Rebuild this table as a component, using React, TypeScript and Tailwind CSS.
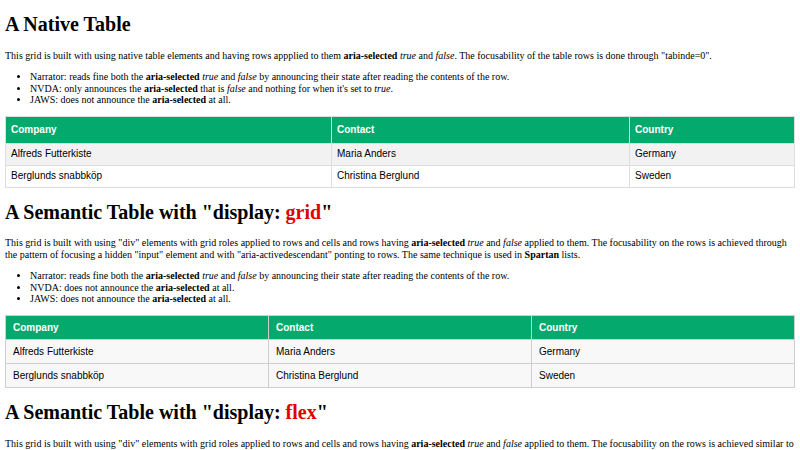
import React from 'react';

const rows = [
  ['Alfreds Futterkiste', 'Maria Anders', 'Germany'],
  ['Berglunds snabbköp', 'Christina Berglund', 'Sweden'],
];

const Narrator = () => (
  <li>
    Narrator: reads fine both the <b>aria-selected</b> <i>true</i> and <i>false</i> by announcing their state after reading the contents of the row.
  </li>
);

const Heading: React.FC<{ children: React.ReactNode }> = ({ children }) => (
  <h1 className="text-[20px] leading-[23px] font-bold my-[13.4px]">{children}</h1>
);

const NativeTable = () => (
  <table className="w-full border-collapse font-['Liberation_Sans',Arial,sans-serif] text-[10px] leading-[11.5px]">
    <colgroup>
      <col className="w-[326px]" />
      <col className="w-[298px]" />
      <col />
    </colgroup>
    <thead>
      <tr>
        {['Company', 'Contact', 'Country'].map((h) => (
          <th key={h} className="bg-[#04aa6d] text-white text-left font-bold border border-[#ddd] px-[5px] pt-[7.25px] pb-[7px]">
            {h}
          </th>
        ))}
      </tr>
    </thead>
    <tbody>
      {rows.map((r, i) => (
        <tr key={i} className={i % 2 === 0 ? 'bg-[#f2f2f2]' : 'bg-white'}>
          {r.map((c) => (
            <td key={c} className="border border-[#ddd] px-[5px] py-[4.75px]">
              {c}
            </td>
          ))}
        </tr>
      ))}
    </tbody>
  </table>
);

const GridTable = () => (
  <div role="grid" className="border-l border-t border-[#cfcfcf] font-['Liberation_Sans',Arial,sans-serif] text-[10px] leading-[11.5px]">
    <div role="row" className="grid grid-cols-3">
      {['Company', 'Contact', 'Country'].map((h) => (
        <div key={h} role="columnheader" className="bg-[#04aa6d] text-white font-bold border-r border-b border-[#cfcfcf] px-[7px] py-[5.75px]">
          {h}
        </div>
      ))}
    </div>
    {rows.map((r, i) => (
      <div key={i} role="row" aria-selected={i === 0} className="grid grid-cols-3 bg-[#f9f8f8]">
        {r.map((c) => (
          <div key={c} role="gridcell" className="border-r border-b border-[#cfcfcf] px-[7px] py-[5.75px]">
            {c}
          </div>
        ))}
      </div>
    ))}
  </div>
);

export default function App() {
  return (
    <div className="px-[5px] bg-white text-black font-['Liberation_Serif','Times_New_Roman',serif] text-[10px] leading-[11.5px]">
      <Heading>A Native Table</Heading>
      <p className="my-[10px]">
        This grid is built with using native table elements and having rows appplied to them <b>aria-selected</b> <i>true</i> and <i>false</i>. The focusability of the table rows is done through "tabinde=0".
      </p>
      <ul className="list-disc pl-[25px] my-[10px]">
        <Narrator />
        <li>
          NVDA: only announces the <b>aria-selected</b> that is <i>false</i> and nothing for when it's set to <i>true</i>.
        </li>
        <li>
          JAWS: does not announce the <b>aria-selected</b> at all.
        </li>
      </ul>
      <NativeTable />

      <Heading>
        A Semantic Table with "display: <span className="text-[#e00000]">grid</span>"
      </Heading>
      <p className="my-[10px]">
        This grid is built with using "div" elements with grid roles applied to rows and cells and rows having <b>aria-selected</b> <i>true</i> and <i>false</i> applied to them. The focusability on the rows is achieved through the pattern of focusing a hidden "input" element and with "aria-activedescendant" ponting to rows. The same technique is used in <b>Spartan</b> lists.
      </p>
      <ul className="list-disc pl-[25px] my-[10px]">
        <Narrator />
        <li>
          NVDA: does not announce the <b>aria-selected</b> at all.
        </li>
        <li>
          JAWS: does not announce the <b>aria-selected</b> at all.
        </li>
      </ul>
      <GridTable />

      <Heading>
        A Semantic Table with "display: <span className="text-[#e00000]">flex</span>"
      </Heading>
      <p className="my-[10px]">
        This grid is built with using "div" elements with grid roles applied to rows and cells and rows having <b>aria-selected</b> <i>true</i> and <i>false</i> applied to them. The focusability on the rows is achieved similar to the grid above, by focusing a hidden "input" element.
      </p>
    </div>
  );
}
